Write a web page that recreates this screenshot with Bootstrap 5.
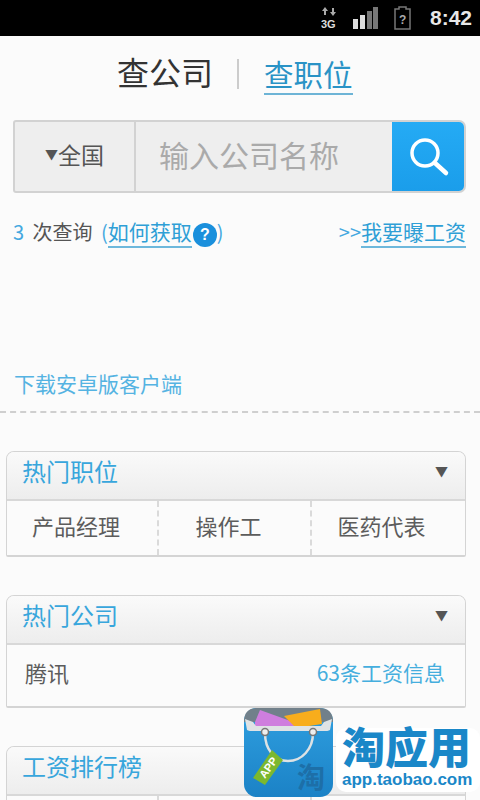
<!DOCTYPE html>
<html lang="zh">

<head>
    <meta charset="UTF-8">
    <meta name="viewport" content="width=device-width, initial-scale=1.0">
    <title>查公司</title>
    <link href="https://cdn.jsdelivr.net/npm/bootstrap@5.3.0/dist/css/bootstrap.min.css" rel="stylesheet">
    <style>
        html,
        body {
            height: 800px;
            overflow: hidden;
        }

        body {
            position: relative;
            background-color: #fbfbfb;
            color: #555;
            font-family: "Noto Sans CJK SC", "Liberation Sans", sans-serif;
        }

        .status-strip {
            height: 36px;
            background-color: #000;
            color: #e8e8e8;
            padding-right: 8px;
        }

        .status-clock {
            font: bold 21px "Liberation Sans", sans-serif;
            margin-left: 19px;
        }

        .tab-line {
            height: 84px;
            padding: 13px 0 0 117px;
            line-height: 44px;
        }

        .tab-on {
            color: #333;
            font-size: 32px;
        }

        .tab-sep {
            width: 2px;
            height: 30px;
            margin: 10px 25px 0 24px;
            background-color: #ccc;
        }

        .tab-link {
            color: #2a93c6;
            font-size: 29.5px;
            line-height: 40px;
            margin-top: 4px;
            border-bottom: 2px solid #6db4d6;
            text-decoration: none;
        }

        .search-box {
            height: 73px;
            margin: 0 14px 0 13px;
            background-color: #eeeeee;
            border: 2px solid #d2d2d2;
            border-radius: 3px 7px 7px 3px;
            overflow: hidden;
        }

        .area-pick {
            width: 121px;
            border-right: 2px solid #d2d2d2;
            color: #555;
            font-size: 23px;
            padding: 0 0 5px 30px;
        }

        .area-pick i {
            font-style: normal;
            font-size: 13px;
        }

        .search-hint {
            color: #aaa;
            font-size: 30px;
            padding: 0 0 4px 23px;
        }

        .search-go {
            width: 74px;
            margin: -2px;
            background: linear-gradient(#25abf5, #1a9dea);
        }

        .query-line {
            margin: 22px 14px 0 13px;
            height: 34px;
            font-size: 20px;
            line-height: 34px;
            word-spacing: 4px;
        }

        .blue-num {
            color: #44a8e0;
        }

        .blue-link {
            color: #2f9fd6;
            font-size: 21px;
            text-decoration: none;
            border-bottom: 2px solid #6db8dc;
            display: inline-block;
            line-height: 30px;
        }

        .help-dot {
            width: 24px;
            height: 24px;
            margin-left: 1px;
            border-radius: 50%;
            background-color: #1a8fdc;
            color: #fff;
            font: bold 16px/24px "Liberation Sans", sans-serif;
            text-align: center;
            display: inline-block;
        }

        .apk-link {
            display: block;
            margin: 119px 0 0 14px;
            color: #55b3e2;
            font-size: 21px;
            line-height: 30px;
            text-decoration: none;
        }

        .dash-rule {
            margin: 13px 0 38px;
            border-top: 2px dashed #cfcfcf;
        }

        .fold-card {
            margin: 0 14px 38px 6px;
            background-color: #fbfbfb;
            border: 1px solid #d4d4d4;
            border-bottom-width: 2px;
            border-radius: 8px 8px 2px 2px;
            overflow: hidden;
        }

        .fold-card:last-of-type {
            height: 53px;
            margin-bottom: 0;
        }

        .fold-head {
            height: 49px;
            padding: 0 15px 9px;
            color: #38a6dc;
            font-size: 24px;
            background: linear-gradient(#fafafa, #ededed);
            border-bottom: 2px solid #d8d8d8;
        }

        .fold-arrow {
            color: #555;
            font-size: 13px;
            margin: 0 2px 0 0;
        }

        .job-cell {
            width: 150px;
            height: 54px;
            padding-right: 12px;
            line-height: 48px;
            text-align: center;
            font-size: 22px;
            color: #5c5c5c;
        }

        .job-cell+.job-cell {
            width: 153px;
            border-left: 2px dashed #dadada;
        }

        .corp-row {
            height: 61px;
            padding: 0 20px 6px 18px;
            font-size: 21px;
            color: #5c5c5c;
        }

        .corp-name {
            font-size: 22px;
        }

        .corp-info {
            color: #45aede;
        }

        .app-badge {
            position: absolute;
            left: 244px;
            top: 708px;
        }

        .app-brand {
            position: absolute;
            left: 336px;
            top: 728px;
            width: 144px;
            height: 64px;
            padding-left: 6px;
            background-color: #fff;
            border-radius: 10px;
            color: #1a87c8;
        }

        .app-brand b {
            display: block;
            font-family: "Liberation Sans", "Noto Sans CJK SC", sans-serif;
            font-size: 43px;
            line-height: 43px;
            font-weight: 900;
        }

        .app-brand span {
            display: block;
            font: bold 17px/18px "Liberation Sans", sans-serif;
        }
    </style>
</head>

<body>
    <div class="status-strip d-flex align-items-center justify-content-end">
        <svg width="16" height="24" viewBox="0 0 16 24">
            <path d="M4 1l3 4H5v4H3V5H1zM12 10l3-4h-2V2h-2v4H9z" fill="#aaa" />
            <text x="0" y="22" font-family="Liberation Sans" font-size="11" font-weight="bold" fill="#ddd">3G</text>
        </svg>
        <svg class="ms-3" width="25" height="22" viewBox="0 0 25 22">
            <path d="M0 12h5v10H0zM7 8h5v14H7z" fill="#ddd" />
            <path d="M14 4h5v18h-5zM20 0h5v22h-5z" fill="#777" />
        </svg>
        <svg class="ms-3" width="17" height="24" viewBox="0 0 17 24">
            <path d="M5 1h7v2h4v20H1V3h4z" fill="none" stroke="#777" stroke-width="1.5" />
            <text x="5" y="18" font-family="Liberation Sans" font-size="12" font-weight="bold" fill="#aaa">?</text>
        </svg>
        <span class="status-clock">8:42</span>
    </div>

    <div class="tab-line d-flex">
        <div class="tab-on">查公司</div>
        <div class="tab-sep"></div>
        <div><a class="tab-link d-block" href="#">查职位</a></div>
    </div>

    <div class="search-box d-flex">
        <div class="area-pick d-flex align-items-center"><i>▼</i>全国</div>
        <div class="search-hint flex-grow-1 d-flex align-items-center">输入公司名称</div>
        <div class="search-go d-flex align-items-center justify-content-center">
            <svg width="42" height="42" viewBox="0 0 42 42" fill="none" stroke="#fff">
                <circle cx="17" cy="17" r="13" stroke-width="3.5" />
                <path d="M27 27l11 10" stroke-width="4.5" stroke-linecap="round" />
            </svg>
        </div>
    </div>

    <div class="query-line d-flex justify-content-between">
        <div><span class="blue-num">3</span> 次查询 <span class="blue-num">(</span><a class="blue-link" href="#">如何获取</a><span class="help-dot">?</span><span class="blue-num">)</span></div>
        <div class="blue-num">&gt;&gt;<a class="blue-link" href="#">我要曝工资</a></div>
    </div>

    <a class="apk-link" href="#">下载安卓版客户端</a>
    <div class="dash-rule"></div>

    <div class="fold-card">
        <div class="fold-head d-flex align-items-center justify-content-between"><span>热门职位</span><span class="fold-arrow">▼</span></div>
        <div class="d-flex">
            <div class="job-cell">产品经理</div>
            <div class="job-cell">操作工</div>
            <div class="job-cell">医药代表</div>
        </div>
    </div>

    <div class="fold-card">
        <div class="fold-head d-flex align-items-center justify-content-between"><span>热门公司</span><span class="fold-arrow">▼</span></div>
        <div class="corp-row d-flex align-items-center justify-content-between"><span class="corp-name">腾讯</span><span class="corp-info">63条工资信息</span></div>
    </div>

    <div class="fold-card">
        <div class="fold-head d-flex align-items-center"><span>工资排行榜</span></div>
        <div class="d-flex">
            <div class="job-cell"></div>
            <div class="job-cell"></div>
            <div class="job-cell"></div>
        </div>
    </div>

    <svg class="app-badge" width="90" height="90" viewBox="0 0 90 90">
        <defs>
            <linearGradient id="bagFill" x1="0" y1="0" x2="0" y2="1">
                <stop offset="0" stop-color="#2f9fe0" />
                <stop offset="1" stop-color="#1b82c6" />
            </linearGradient>
        </defs>
        <rect x="0" y="0" width="89" height="89" rx="13" fill="url(#bagFill)" />
        <path d="M0 14C0 4 5 0 14 0h61c9 0 14 4 14 14z" fill="#71808a" />
        <path d="M11 14L16 2l36 13 4 4H11z" fill="#cf7ede" />
        <path d="M40 8l36-7 2 15-26 4z" fill="#f8ad1c" />
        <path d="M1 11l8 3 3 4h65l3-4 8-3-2 11c-1 1-4 1-7 1H10c-3 0-6 0-7-1z" fill="#dfe3e5" />
        <path d="M21 25c0 16 9 28 23 28s25-12 25-28" fill="none" stroke="#dde2e4" stroke-width="2.5" />
        <circle cx="21" cy="24" r="3.5" fill="#eee" stroke="#777" stroke-width="1.5" />
        <circle cx="69" cy="24" r="3.5" fill="#eee" stroke="#777" stroke-width="1.5" />
        <path d="M28 42l11 10-18 25-12-7z" fill="#7cb82e" />
        <text x="0" y="0" transform="translate(21 71) rotate(-55)" font-family="Liberation Sans" font-size="11" font-weight="bold" fill="#fff">APP</text>
        <text x="53" y="80" font-family="Noto Sans CJK SC" font-size="28" font-weight="700" fill="#1d6fa8">淘</text>
    </svg>
    <div class="app-brand"><b>淘应用</b><span>app.taobao.com</span></div>
</body>

</html>
